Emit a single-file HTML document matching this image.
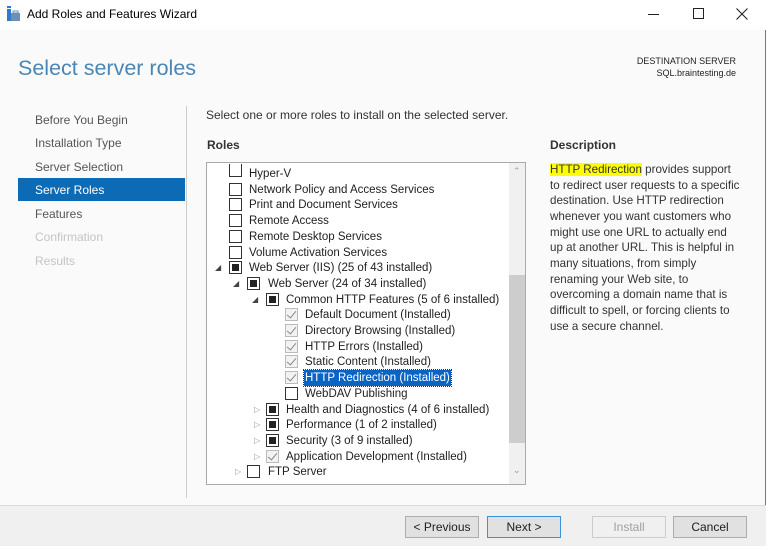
<!DOCTYPE html>
<html><head><meta charset="utf-8"><style>
*{margin:0;padding:0;box-sizing:border-box}
body{width:768px;height:550px;overflow:hidden;background:#fff;font-family:"Liberation Sans",sans-serif;font-size:11.5px;color:#1e1e1e;position:relative}
.a{position:absolute;white-space:nowrap}
#win{position:absolute;left:0;top:0;width:766px;height:546px;background:#fafafa;border-right:1px solid #777;border-bottom:1px solid #777}
#tb{position:absolute;left:0;top:0;width:766px;height:30px;background:#fff}
.nav{position:absolute;left:35px;color:#555;font-size:12px}
.row{position:absolute;height:16px;line-height:16px;font-size:11.5px}
.cb{position:absolute;width:13px;height:13px;border:1px solid #333;background:#fff;top:1px}
.cb.f::after{content:"";position:absolute;left:2px;top:2px;width:7px;height:7px;background:#222}
.cb.c{border-color:#bbb;background:#f2f2f2}
.cb.c::after{content:"";position:absolute;left:3px;top:0px;width:4px;height:8px;border-right:1.5px solid #888;border-bottom:1.5px solid #888;transform:rotate(40deg)}
.ex{position:absolute;font-size:8px;color:#444;top:0}
.ec{position:absolute;font-size:8px;color:#999;top:0}
.btn{position:absolute;top:516px;width:74px;height:22px;border:1px solid #adadad;background:#e1e1e1;text-align:center;line-height:20px;font-size:12px}
.d{position:absolute;left:550px;font-size:11.6px;color:#333;white-space:nowrap}
</style></head><body>
<div id="win">
<div id="tb">
<svg class="a" style="left:6px;top:6px" width="14" height="16"><rect x="1" y="0" width="4" height="2" fill="#2b7bd0"/><rect x="1" y="3" width="4" height="12" fill="#2b7bd0"/><rect x="5" y="7" width="9" height="8" fill="#6b8fb5"/><rect x="7" y="5" width="5" height="2" fill="none" stroke="#6b8fb5"/></svg>
<div class="a" style="left:27px;top:7px;font-size:12px;color:#000">Add Roles and Features Wizard</div>
<div class="a" style="left:648px;top:14px;width:11px;height:1px;background:#222"></div>
<div class="a" style="left:693px;top:8px;width:11px;height:11px;border:1px solid #222"></div>
<svg class="a" style="left:736px;top:8px" width="12" height="12"><path d="M0.5 0.5L11.5 11.5M11.5 0.5L0.5 11.5" stroke="#222" stroke-width="1.1"/></svg>
</div>
<div class="a" style="left:18px;top:56px;font-size:21.5px;color:#4a86b6;font-weight:300">Select server roles</div>
<div class="a" style="right:29px;top:55px;font-size:9px;color:#222;text-align:right;line-height:12px">DESTINATION SERVER<br>SQL.braintesting.de</div>
<div class="nav" style="top:113px">Before You Begin</div>
<div class="nav" style="top:136px">Installation Type</div>
<div class="nav" style="top:160px">Server Selection</div>
<div class="a" style="left:18px;top:178px;width:167px;height:23px;background:#0d6bb5"></div>
<div class="nav" style="top:183px;color:#fff">Server Roles</div>
<div class="nav" style="top:207px">Features</div>
<div class="nav" style="top:230px;color:#c4c4c4">Confirmation</div>
<div class="nav" style="top:254px;color:#c4c4c4">Results</div>
<div class="a" style="left:186px;top:106px;width:1px;height:392px;background:#ccc"></div>
<div class="a" style="left:206px;top:108px;font-size:12px;color:#333">Select one or more roles to install on the selected server.</div>
<div class="a" style="left:207px;top:138px;font-size:12px;font-weight:bold;color:#333">Roles</div>
<div class="a" style="left:206px;top:162px;width:320px;height:323px;border:1px solid #aaa;background:#fff;overflow:hidden">
<div class="a" style="left:302px;top:0;width:17px;height:321px;background:#f0f0f0"></div>
<div class="a" style="left:302px;top:112px;width:17px;height:168px;background:#cdcdcd"></div>
<div class="a" style="left:306px;top:3px;font-size:9px;color:#999">&#8963;</div>
<div class="a" style="left:306px;top:302px;font-size:9px;color:#999">&#8964;</div>
<div style="position:absolute;left:0;top:3px">
<div class="row" style="top:0"><div class="cb" style="left:22px;top:-2px;border-top:none"></div><span class="a" style="left:42px">Hyper-V</span></div>
<div class="row" style="top:15.7px"><div class="cb" style="left:22px"></div><span class="a" style="left:42px">Network Policy and Access Services</span></div>
<div class="row" style="top:31.4px"><div class="cb" style="left:22px"></div><span class="a" style="left:42px">Print and Document Services</span></div>
<div class="row" style="top:47.1px"><div class="cb" style="left:22px"></div><span class="a" style="left:42px">Remote Access</span></div>
<div class="row" style="top:62.8px"><div class="cb" style="left:22px"></div><span class="a" style="left:42px">Remote Desktop Services</span></div>
<div class="row" style="top:78.5px"><div class="cb" style="left:22px"></div><span class="a" style="left:42px">Volume Activation Services</span></div>
<div class="row" style="top:94.2px"><span class="ex" style="left:8px">&#9698;</span><div class="cb f" style="left:22px"></div><span class="a" style="left:42px">Web Server (IIS) (25 of 43 installed)</span></div>
<div class="row" style="top:109.9px"><span class="ex" style="left:26px">&#9698;</span><div class="cb f" style="left:40px"></div><span class="a" style="left:61px">Web Server (24 of 34 installed)</span></div>
<div class="row" style="top:125.6px"><span class="ex" style="left:45px">&#9698;</span><div class="cb f" style="left:59px"></div><span class="a" style="left:79px">Common HTTP Features (5 of 6 installed)</span></div>
<div class="row" style="top:141.3px"><div class="cb c" style="left:78px"></div><span class="a" style="left:98px">Default Document (Installed)</span></div>
<div class="row" style="top:157px"><div class="cb c" style="left:78px"></div><span class="a" style="left:98px">Directory Browsing (Installed)</span></div>
<div class="row" style="top:172.7px"><div class="cb c" style="left:78px"></div><span class="a" style="left:98px">HTTP Errors (Installed)</span></div>
<div class="row" style="top:188.4px"><div class="cb c" style="left:78px"></div><span class="a" style="left:98px">Static Content (Installed)</span></div>
<div class="row" style="top:204.1px"><div class="cb c" style="left:78px"></div><span class="a" style="left:97px;background:#0a64c4;color:#fff;padding:0 1px;outline:1px dotted #333">HTTP Redirection (Installed)</span></div>
<div class="row" style="top:219.8px"><div class="cb" style="left:78px"></div><span class="a" style="left:98px">WebDAV Publishing</span></div>
<div class="row" style="top:235.5px"><span class="ec" style="left:47px">&#9655;</span><div class="cb f" style="left:59px"></div><span class="a" style="left:79px">Health and Diagnostics (4 of 6 installed)</span></div>
<div class="row" style="top:251.2px"><span class="ec" style="left:47px">&#9655;</span><div class="cb f" style="left:59px"></div><span class="a" style="left:79px">Performance (1 of 2 installed)</span></div>
<div class="row" style="top:266.9px"><span class="ec" style="left:47px">&#9655;</span><div class="cb f" style="left:59px"></div><span class="a" style="left:79px">Security (3 of 9 installed)</span></div>
<div class="row" style="top:282.6px"><span class="ec" style="left:47px">&#9655;</span><div class="cb c" style="left:59px"></div><span class="a" style="left:79px">Application Development (Installed)</span></div>
<div class="row" style="top:298.3px"><span class="ec" style="left:28px">&#9655;</span><div class="cb" style="left:40px"></div><span class="a" style="left:61px">FTP Server</span></div>
</div>
</div>
<div class="d" style="top:138px;font-weight:bold;font-size:12px">Description</div>
<div class="d" style="top:163px"><span style="background:#ffff00">HTTP Redirection</span> provides support</div>
<div class="d" style="top:179px">to redirect user requests to a specific</div>
<div class="d" style="top:194px">destination. Use HTTP redirection</div>
<div class="d" style="top:210px">whenever you want customers who</div>
<div class="d" style="top:226px">might use one URL to actually end</div>
<div class="d" style="top:241px">up at another URL. This is helpful in</div>
<div class="d" style="top:257px">many situations, from simply</div>
<div class="d" style="top:273px">renaming your Web site, to</div>
<div class="d" style="top:288px">overcoming a domain name that is</div>
<div class="d" style="top:304px">difficult to spell, or forcing clients to</div>
<div class="d" style="top:320px">use a secure channel.</div>
<div class="a" style="left:0;top:505px;width:766px;height:41px;background:#f0f0f0;border-top:1px solid #dadada"></div>
<div class="btn" style="left:405px">&lt; Previous</div>
<div class="btn" style="left:487px;border-color:#3d8fd8">Next &gt;</div>
<div class="btn" style="left:592px;color:#a0a0a0;border-color:#ccc;background:#f0f0f0">Install</div>
<div class="btn" style="left:673px">Cancel</div>
</div>
</body></html>
